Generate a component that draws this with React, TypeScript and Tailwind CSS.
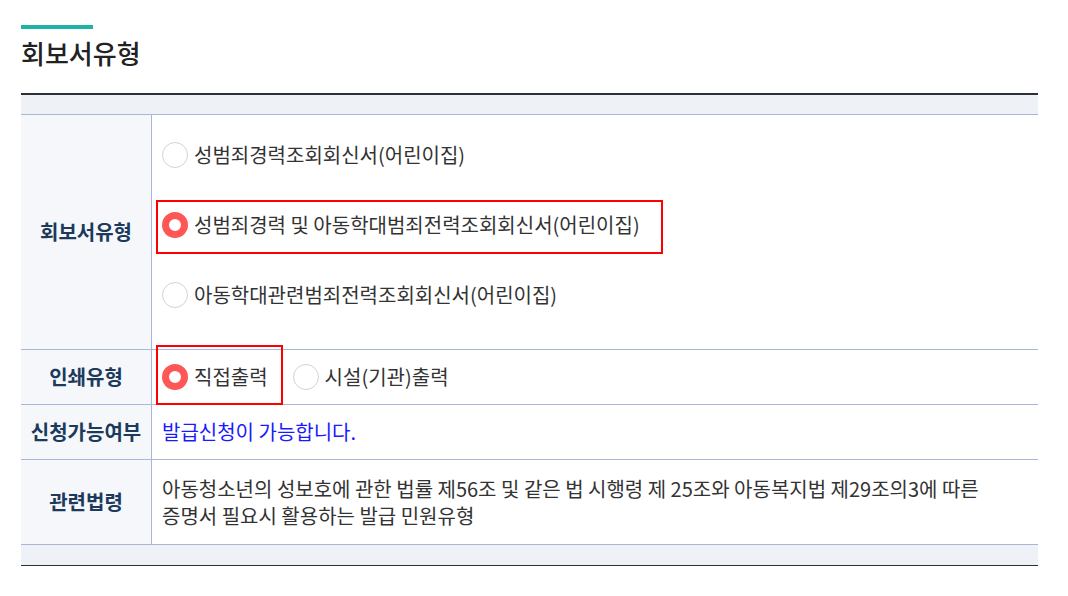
import React from "react"

const font = { fontFamily: '"Noto Sans CJK KR", "Noto Sans", sans-serif' }

function Radio({ checked }: { checked?: boolean }) {
  return checked ? (
    <span className="block h-[26px] w-[26px] shrink-0 rounded-full border-[7px] border-[#ff5656] bg-white" />
  ) : (
    <span className="block h-[26px] w-[26px] shrink-0 rounded-full border border-[#cfd3db] bg-white" />
  )
}

function Option({ label, checked }: { label: string; checked?: boolean }) {
  return (
    <label className="flex items-center gap-[6px] text-[20px] leading-[26px] text-[#333]">
      <Radio checked={checked} />
      <span>{label}</span>
    </label>
  )
}

function Row({ title, children, className = "" }: { title: string; children: React.ReactNode; className?: string }) {
  return (
    <div className="flex border-b border-[#aab6d8]">
      <div className="flex w-[131px] shrink-0 items-center justify-center border-r border-[#aab6d8] bg-[#f5f7fa] text-[20px] font-bold text-[#1b3a5c]">
        {title}
      </div>
      <div className={"flex-1 pl-[10px] " + className}>{children}</div>
    </div>
  )
}

export default function App() {
  return (
    <div className="min-h-[596px] bg-white" style={font}>
      <div className="w-[1038px] pl-[21px] pt-[25px]">
        <div className="h-[4px] w-[72px] bg-[#1db3a6]" />
        <h2 className="mt-[7px] text-[26px] font-medium leading-[34px] text-[#222]">회보서유형</h2>

        <div className="mt-[23px] border-t-2 border-[#2b2f36]">
          <div className="h-[20px] border-b border-[#aab6d8] bg-[#eef1f6]" />

          <Row title="회보서유형" className="flex flex-col gap-[44px] pt-[27px] pb-[41px]">
            <Option label="성범죄경력조회회신서(어린이집)" />
            <div className="relative">
              <div className="pointer-events-none absolute left-[-6px] top-[-12px] h-[54px] w-[507px] border-2 border-[#ff0000]" />
              <Option label="성범죄경력 및 아동학대범죄전력조회회신서(어린이집)" checked />
            </div>
            <Option label="아동학대관련범죄전력조회회신서(어린이집)" />
          </Row>

          <Row title="인쇄유형" className="flex h-[54px] items-center gap-[25px]">
            <div className="relative">
              <div className="pointer-events-none absolute left-[-6px] top-[-19px] h-[60px] w-[127px] border-2 border-[#ff0000]" />
              <Option label="직접출력" checked />
            </div>
            <Option label="시설(기관)출력" />
          </Row>

          <Row title="신청가능여부" className="flex h-[54px] items-center">
            <span className="text-[20px] text-[#1a1aff]">발급신청이 가능합니다.</span>
          </Row>

          <Row title="관련법령" className="py-[15px] text-[20px] leading-[27px] text-[#333]">
            <p>아동청소년의 성보호에 관한 법률 제56조 및 같은 법 시행령 제 25조와 아동복지법 제29조의3에 따른</p>
            <p>증명서 필요시 활용하는 발급 민원유형</p>
          </Row>

          <div className="h-[21px] border-b border-[#2b2f36] bg-[#eef1f6]" />
        </div>
      </div>
    </div>
  )
}
